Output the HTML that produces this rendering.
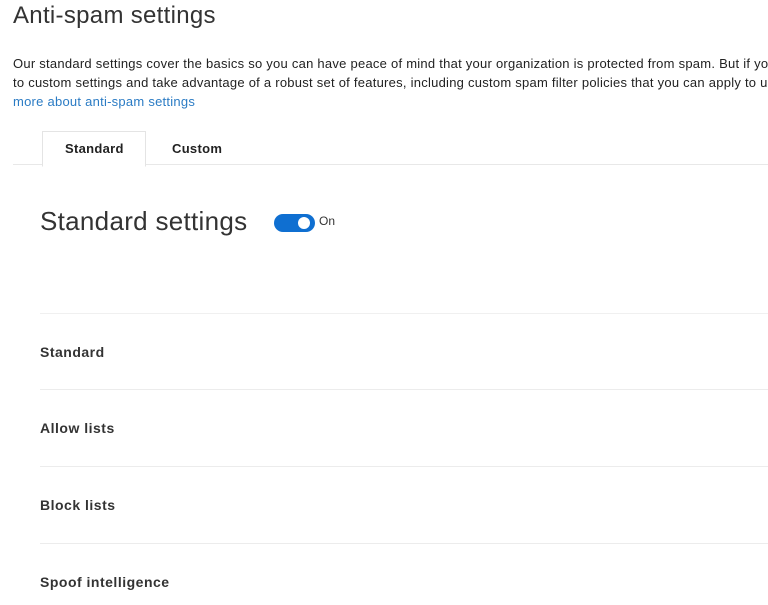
<!DOCTYPE html>
<html><head><style>
body{margin:0;width:768px;height:605px;overflow:hidden;background:#fff;font-family:"Liberation Sans",sans-serif;color:#222;position:relative}
.a{position:absolute;white-space:nowrap}
.line{position:absolute;height:1px;background:#ececec;right:0}
.r{font-size:14px;font-weight:bold;color:#333;letter-spacing:0.5px}
</style></head><body>
<div class="a" style="left:13px;top:2px;font-size:24px;color:#333;letter-spacing:0.3px">Anti-spam settings</div>
<div class="a" style="left:13px;top:54px;font-size:13px;line-height:19px;color:#222;letter-spacing:0.25px">Our standard settings cover the basics so you can have peace of mind that your organization is protected from spam. But if you<br>to custom settings and take advantage of a robust set of features, including custom spam filter policies that you can apply to us<br><span style="color:#2a7bc4">more about anti-spam settings</span></div>
<div class="line" style="left:13px;top:164px;background:#e8e8e8"></div>
<div class="a" style="left:42px;top:131px;width:102px;height:34px;border:1px solid #e4e4e4;border-bottom:1px solid #fff;background:#fff"></div>
<div class="a" style="left:65px;top:141px;font-size:13px;font-weight:bold;color:#222;letter-spacing:0.3px">Standard</div>
<div class="a" style="left:172px;top:141px;font-size:13px;font-weight:bold;color:#222;letter-spacing:0.3px">Custom</div>
<div class="a" style="left:40px;top:206px;font-size:26px;color:#333;letter-spacing:0.3px">Standard settings</div>
<div class="a" style="left:274px;top:214px;width:41px;height:18px;border-radius:9px;background:#0f6fd1"></div>
<div class="a" style="left:298px;top:217px;width:12px;height:12px;border-radius:6px;background:#fff"></div>
<div class="a" style="left:319px;top:214px;font-size:12px;color:#333">On</div>
<div class="line" style="left:40px;top:313px;background:#f0f0f0"></div>
<div class="a r" style="left:40px;top:344px">Standard</div>
<div class="line" style="left:40px;top:389px"></div>
<div class="a r" style="left:40px;top:420px">Allow lists</div>
<div class="line" style="left:40px;top:466px"></div>
<div class="a r" style="left:40px;top:497px">Block lists</div>
<div class="line" style="left:40px;top:543px"></div>
<div class="a r" style="left:40px;top:574px">Spoof intelligence</div>
</body></html>
